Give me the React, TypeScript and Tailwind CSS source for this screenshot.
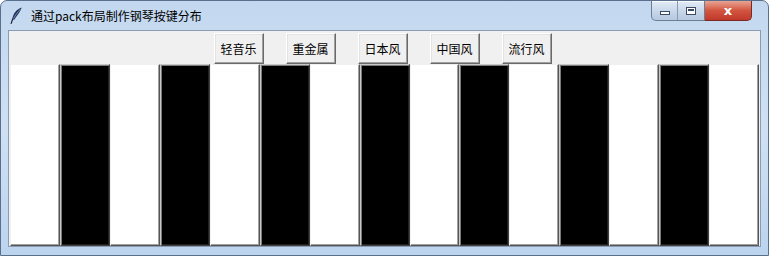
const TITLE = "通过pack布局制作钢琴按键分布";
const STYLES = ["轻音乐", "重金属", "日本风", "中国风", "流行风"];
const KEY_COUNT = 15;

const CJK = { fontFamily: '"Noto Sans CJK SC", "Noto Sans", sans-serif' };

function Feather() {
  return (
    <svg width="13" height="17" viewBox="0 0 12 16" className="shrink-0">
      <path d="M11 0.5 C6.2 2 3 6 1.9 11.6 L3.9 12 C6 8.5 9 5.5 11 0.5 Z" fill="#22335a" />
      <path d="M2.4 11.4 L1 15.4" stroke="#1a2440" strokeWidth="1.2" strokeLinecap="round" />
      <path d="M9.8 2 C7.2 4.5 5 7.5 3.2 11" stroke="#a8b8d8" strokeWidth="0.6" fill="none" />
    </svg>
  );
}

function CaptionButtons() {
  return (
    <div className="flex h-[20px] self-start">
      <div className="flex h-full rounded-bl-[5px] border border-t-0 border-[#6d7d93] bg-gradient-to-b from-[#e4ecf6] via-[#c9d8ea] to-[#b6c9e0] shadow-[inset_0_1px_0_rgba(255,255,255,0.8)]">
        <div className="flex w-[26px] items-center justify-center border-r border-[#8a9ab0]">
          <div className="mt-[5px] h-[4px] w-[10px] border border-[#3a4a62] bg-white" />
        </div>
        <div className="flex w-[26px] items-center justify-center">
          <div className="h-[8px] w-[10px] border border-[#3a4a62] bg-white p-[1px]">
            <div className="h-full w-full border-t-2 border-[#3a4a62]" />
          </div>
        </div>
      </div>
      <div className="flex h-full w-[47px] items-center justify-center rounded-br-[5px] border border-l-0 border-t-0 border-[#7a2a22] bg-gradient-to-b from-[#e8a394] via-[#d2553f] to-[#c0392b]">
        <span
          className="text-[13px] font-bold leading-none text-white"
          style={{ fontFamily: '"DejaVu Sans", sans-serif' }}
        >
          x
        </span>
      </div>
    </div>
  );
}

function StyleButton({ label }: { label: string }) {
  return (
    <button
      type="button"
      className="h-[31px] w-[50px] border border-b-[#696969] border-l-white border-r-[#696969] border-t-white bg-[#f0f0f0] text-[12px] text-black shadow-[inset_-1px_-1px_0_#a0a0a0,inset_1px_1px_0_#e3e3e3]"
      style={CJK}
    >
      {label}
    </button>
  );
}

function PianoKey({ black }: { black: boolean }) {
  return (
    <div
      className={
        black
          ? "h-full flex-1 border border-b-[#404040] border-l-[#c8c8c8] border-r-[#404040] border-t-[#c8c8c8] bg-black shadow-[inset_1px_1px_0_#7a7a7a,inset_-1px_-1px_0_#202020]"
          : "h-full flex-1 border border-b-[#555555] border-l-[#f0f0f0] border-r-[#555555] border-t-[#f0f0f0] bg-white shadow-[inset_-1px_-1px_0_#a0a0a0]"
      }
    />
  );
}

export default function App() {
  return (
    <div className="h-[256px] w-[769px] overflow-hidden bg-white">
      <div className="flex h-full w-full flex-col rounded-t-[7px] border border-[#5a6f8c] bg-gradient-to-b from-[#c3d8ef] via-[#cfe0f3] to-[#bcd4ee]">
        <div className="flex h-[29px] items-center gap-[8px] pl-[9px] pr-[16px]">
          <Feather />
          <span className="text-[12px] leading-none text-black" style={CJK}>
            {TITLE}
          </span>
          <div className="flex-1" />
          <CaptionButtons />
        </div>
        <div className="ml-[7px] flex h-[217px] w-[753px] flex-col border border-[#8a9bb3] bg-[#f0f0f0]">
          <div className="flex h-[33px] items-end justify-center gap-[22px] pr-[4px]">
            {STYLES.map((s) => (
              <StyleButton key={s} label={s} />
            ))}
          </div>
          <div className="flex flex-1 pl-[1px] pr-[1px]">
            {Array.from({ length: KEY_COUNT }, (_, i) => (
              <PianoKey key={i} black={i % 2 === 1} />
            ))}
          </div>
        </div>
      </div>
    </div>
  );
}
